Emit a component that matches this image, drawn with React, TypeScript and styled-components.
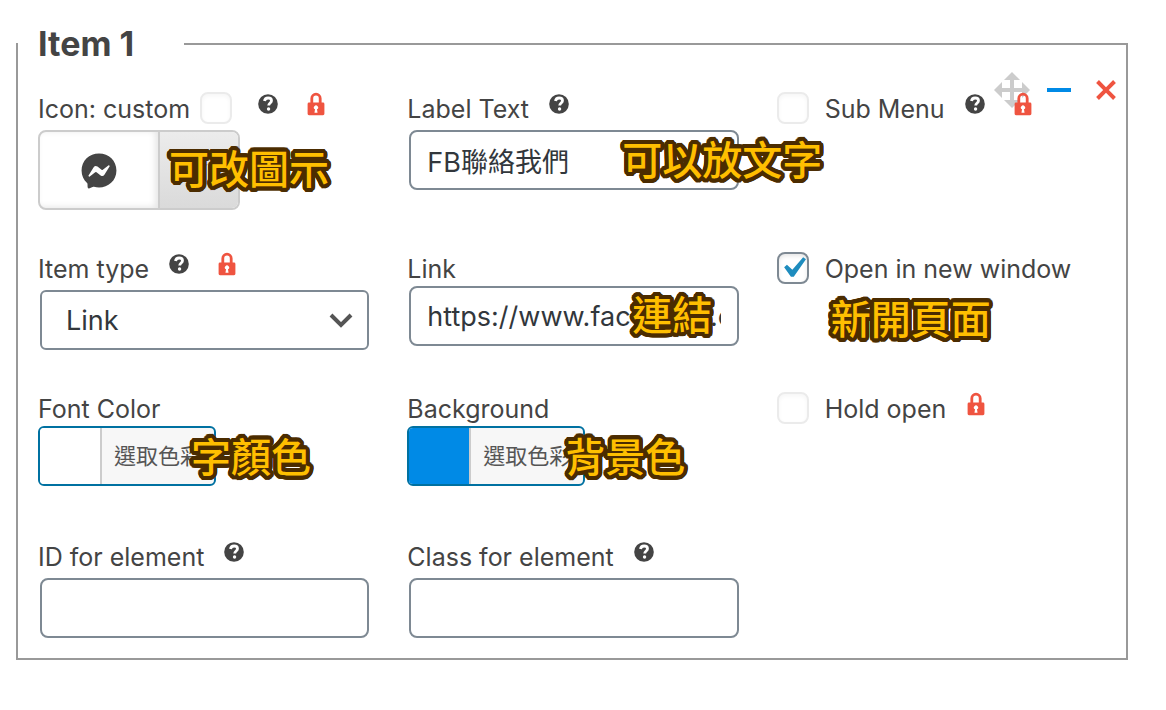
import React, { useState } from "react";
import styled, { createGlobalStyle, css } from "styled-components";
import { FaFacebookMessenger } from "react-icons/fa6";

const Global = createGlobalStyle`
  *, *::before, *::after { box-sizing: border-box; }
  body {
    margin: 0;
    background: #fff;
    color: #444;
    font-family: Inter, "Noto Sans CJK TC", sans-serif;
    font-size: 25px;
  }
  button, input, select { font: inherit; color: inherit; }
`;

const Page = styled.main`
  padding: 24px 38px 50px 16px;
`;

const Panel = styled.fieldset`
  margin: 0;
  padding: 0;
  min-width: 0;
  border: 2px solid #999;
`;

const Title = styled.legend`
  padding: 0 50px 0 20px;
  font-size: 34px;
  line-height: 40px;
  font-weight: 700;
`;

const Body = styled.div`
  position: relative;
  padding: 28px 0 20px;
`;

const Grid = styled.div`
  display: grid;
  grid-template-columns: repeat(3, minmax(0, 1fr));
  row-gap: 42px;
`;

const Field = styled.div`
  position: relative;
  padding: 0 18px 0 20px;
`;

const LabelRow = styled.div<{ $compact?: boolean }>`
  display: flex;
  align-items: flex-start;
  height: ${(p) => (p.$compact ? 34 : 38)}px;
  line-height: 34px;
  white-space: nowrap;
`;

const Icons = styled.span<{ $wide?: boolean }>`
  position: relative;
  z-index: 1;
  display: flex;
  gap: 20px;
  margin: -2px 0 0 ${(p) => (p.$wide ? 22 : 16)}px;
`;

const Glyph = styled.svg<{ $size: number }>`
  display: block;
  flex: none;
  width: ${(p) => p.$size}px;
  height: ${(p) => p.$size}px;
  fill: currentColor;
`;

const HelpButton = styled.button`
  padding: 0;
  border: 0;
  background: none;
  color: #444;
  cursor: help;
`;

const LockMark = styled.span`
  color: #ef5440;
`;

const box = css`
  height: 60px;
  margin-left: 2px;
  width: calc(100% - 2px);
  border: 2px solid #7e8993;
  border-radius: 8px;
  background: #fff;
  color: #32373c;
  font-size: 27px;
`;

const TextInput = styled.input`
  ${box}
  display: block;
  padding: 0 16px;
`;

const SelectWrap = styled.div`
  display: grid;
  align-items: center;
  > * { grid-area: 1 / 1; }
  > svg { justify-self: end; margin-right: 16px; pointer-events: none; }
`;

const Select = styled.select`
  ${box}
  border-radius: 6px;
  padding: 0 48px 0 24px;
  appearance: none;
`;

const CheckWrap = styled.span`
  display: grid;
  flex: none;
  grid-template: 32px / 32px;
  width: 32px;
  height: 32px;
  place-items: center;
  > * { grid-area: 1 / 1; }
  > svg { pointer-events: none; color: #1e8cbe; }
`;

const CheckInput = styled.input`
  appearance: none;
  width: 32px;
  height: 32px;
  margin: 0;
  border: 2px solid #ebebeb;
  border-radius: 8px;
  background: #fff;
  box-shadow: inset 0 2px 4px rgba(0, 0, 0, 0.04);
  &:checked {
    border-color: #7e8993;
    box-shadow: inset 0 2px 4px rgba(0, 0, 0, 0.1);
  }
`;

const CheckLabel = styled.label<{ $boxLast?: boolean }>`
  display: flex;
  flex-direction: ${(p) => (p.$boxLast ? "row-reverse" : "row")};
  gap: ${(p) => (p.$boxLast ? 10 : 16)}px;
`;

const IconPicker = styled.button`
  display: flex;
  width: 202px;
  height: 80px;
  padding: 0;
  overflow: hidden;
  border: 2px solid #ccc;
  border-radius: 8px;
  background: #fff;
`;

const PickedIcon = styled.span`
  display: grid;
  place-items: center;
  flex: 3;
  height: 100%;
  padding-top: 2px;
  border-right: 2px solid #ccc;
  box-shadow: inset -3px -1px 6px rgba(0, 0, 0, 0.1);
  color: #444;
`;

const PickerArrow = styled.span`
  display: grid;
  place-items: center;
  flex: 2;
  height: 100%;
  background: linear-gradient(#ececec, #dadada);
  color: #a5aab2;
`;

const ColorButton = styled.button`
  display: flex;
  width: 178px;
  height: 60px;
  margin-bottom: 12px;
  padding: 0;
  overflow: hidden;
  border: 2px solid #0071a1;
  border-radius: 6px;
  background: #f7f7f7;
  color: #555;
  font-size: 22px;
  line-height: 56px;
  white-space: nowrap;
`;

const Swatch = styled.span<{ $color: string }>`
  flex: 1;
  height: 100%;
  background: ${(p) => p.$color};
`;

const ColorText = styled.span`
  padding: 0 12px;
  border-left: 2px solid #ccc;
`;

const Tools = styled.div`
  position: absolute;
  top: 6px;
  right: 0;
  display: flex;
  gap: 7px;
`;

const ToolButton = styled.button<{ $color: string }>`
  padding: 0;
  border: 0;
  background: none;
  color: ${(p) => p.$color};
  cursor: pointer;
`;

// Round-cornered outline: a ring of solid shadows around each glyph.
const ring = (radius: number, steps: number, color: string) =>
  Array.from({ length: steps }, (_, i) => {
    const a = (i / steps) * Math.PI * 2;
    return `${(Math.cos(a) * radius).toFixed(2)}px ${(Math.sin(a) * radius).toFixed(2)}px 0 ${color}`;
  }).join(", ");

const outline = `${ring(4, 28, "#4b2c00")}, ${ring(2, 12, "#4b2c00")}`;

const Note = styled.strong<{ $x: number; $y: number }>`
  position: absolute;
  z-index: 2;
  left: ${(p) => p.$x}px;
  top: ${(p) => p.$y}px;
  color: #ffbf00;
  font-family: "Noto Sans CJK TC", sans-serif;
  font-size: 40px;
  line-height: 40px;
  font-weight: 500;
  white-space: nowrap;
  text-shadow: ${outline};
  pointer-events: none;
`;

const Help = () => (
  <HelpButton type="button" aria-label="Help">
    <Glyph $size={28} viewBox="0 0 20 20">
      <circle cx="10" cy="10" r="7" />
      <path
        d="M7.5 7.9C7.7 6.4 8.6 5.7 10.1 5.7c1.5 0 2.4.8 2.4 2 0 1.6-2 1.6-2 3.4"
        fill="none"
        stroke="#fff"
        strokeWidth="2"
      />
      <circle cx="10.4" cy="13.6" r="1.2" fill="#fff" />
    </Glyph>
  </HelpButton>
);

const Lock = () => (
  <LockMark role="img" aria-label="Locked">
    <Glyph $size={28} viewBox="0 0 20 20">
      <path d="M6 9V6a4 4 0 0 1 8 0v3h1a1 1 0 0 1 1 1v7a1 1 0 0 1-1 1H5a1 1 0 0 1-1-1v-7a1 1 0 0 1 1-1zm2 0h4V6a2 2 0 0 0-4 0z" />
      <path d="M8.9 16.2l.4-2.4a1.5 1.5 0 1 1 1.4 0l.4 2.4z" fill="#fff" />
    </Glyph>
  </LockMark>
);

type CheckProps = { text: string; checked?: boolean; boxLast?: boolean };

const Check = ({ text, checked = false, boxLast }: CheckProps) => {
  const [on, setOn] = useState(checked);
  return (
    <CheckLabel $boxLast={boxLast}>
      <CheckWrap>
        <CheckInput type="checkbox" checked={on} onChange={() => setOn(!on)} />
        {on && (
          <Glyph $size={42} viewBox="0 0 20 20">
            <path d="M14.83 4.89l1.34.94-5.81 8.38H9.02L5.78 9.67l1.34-1.25 2.57 2.4z" />
          </Glyph>
        )}
      </CheckWrap>
      {text}
    </CheckLabel>
  );
};

const ColorPick = ({ id, color }: { id: string; color: string }) => (
  <ColorButton type="button" id={id}>
    <Swatch $color={color} />
    <ColorText>選取色彩</ColorText>
  </ColorButton>
);

export default function App() {
  return (
    <Page>
      <Global />
      <Panel>
        <Title>Item 1</Title>
        <Body>
          <Tools>
            <ToolButton type="button" $color="#ccc" aria-label="Move">
              <Glyph $size={40} viewBox="0 0 20 20">
                <path d="M19 10l-4 4v-3h-4v4h3l-4 4-4-4h3v-4H5v3l-4-4 4-4v3h4V5H6l4-4 4 4h-3v4h4V6z" />
              </Glyph>
            </ToolButton>
            <ToolButton type="button" $color="#008ae6" aria-label="Collapse">
              <Glyph $size={40} viewBox="0 0 20 20">
                <path d="M4 9h12v2H4z" />
              </Glyph>
            </ToolButton>
            <ToolButton type="button" $color="#ef5440" aria-label="Remove">
              <Glyph $size={40} viewBox="0 0 20 20">
                <path d="M14.95 6.46L11.41 10l3.54 3.54-1.41 1.41L10 11.42l-3.53 3.53-1.42-1.42L8.58 10 5.05 6.47l1.42-1.42L10 8.58l3.54-3.53z" />
              </Glyph>
            </ToolButton>
          </Tools>
          <Grid>
            <Field>
              <LabelRow>
                <Check text="Icon: custom" boxLast />
                <Icons $wide>
                  <Help />
                  <Lock />
                </Icons>
              </LabelRow>
              <IconPicker type="button" aria-label="Choose icon">
                <PickedIcon>
                  <FaFacebookMessenger size={36} />
                </PickedIcon>
                <PickerArrow>
                  <Glyph $size={20} viewBox="0 0 20 20">
                    <path d="M1 4h18l-9 10z" />
                  </Glyph>
                </PickerArrow>
              </IconPicker>
              <Note $x={151} $y={55}>可改圖示</Note>
            </Field>
            <Field>
              <LabelRow>
                <label htmlFor="label-text">Label Text</label>
                <Icons>
                  <Help />
                </Icons>
              </LabelRow>
              <TextInput id="label-text" type="text" defaultValue="FB聯絡我們" />
              <Note $x={235} $y={46}>可以放文字</Note>
            </Field>
            <Field>
              <LabelRow>
                <Check text="Sub Menu" />
                <Icons>
                  <Help />
                  <Lock />
                </Icons>
              </LabelRow>
            </Field>

            <Field>
              <LabelRow>
                <label htmlFor="item-type">Item type</label>
                <Icons>
                  <Help />
                  <Lock />
                </Icons>
              </LabelRow>
              <SelectWrap>
                <Select id="item-type" defaultValue="link">
                  <option value="link">Link</option>
                </Select>
                <Glyph $size={24} viewBox="0 0 24 24">
                  <path d="M2 7l10 10L22 7" fill="none" stroke="#555" strokeWidth="4" />
                </Glyph>
              </SelectWrap>
            </Field>
            <Field>
              <LabelRow $compact>
                <label htmlFor="link-url">Link</label>
              </LabelRow>
              <TextInput id="link-url" type="text" defaultValue="https://www.facebook.com/" />
              <Note $x={245} $y={41}>連結</Note>
            </Field>
            <Field>
              <LabelRow>
                <Check text="Open in new window" checked />
              </LabelRow>
              <Note $x={74} $y={45}>新開頁面</Note>
            </Field>

            <Field>
              <LabelRow $compact>
                <label htmlFor="font-color">Font Color</label>
              </LabelRow>
              <ColorPick id="font-color" color="#fff" />
              <Note $x={173} $y={43}>字顏色</Note>
            </Field>
            <Field>
              <LabelRow $compact>
                <label htmlFor="background-color">Background</label>
              </LabelRow>
              <ColorPick id="background-color" color="#008ae6" />
              <Note $x={178} $y={43}>背景色</Note>
            </Field>
            <Field>
              <LabelRow>
                <Check text="Hold open" />
                <Icons>
                  <Lock />
                </Icons>
              </LabelRow>
            </Field>

            <Field>
              <LabelRow>
                <label htmlFor="element-id">ID for element</label>
                <Icons>
                  <Help />
                </Icons>
              </LabelRow>
              <TextInput id="element-id" type="text" />
            </Field>
            <Field>
              <LabelRow>
                <label htmlFor="element-class">Class for element</label>
                <Icons>
                  <Help />
                </Icons>
              </LabelRow>
              <TextInput id="element-class" type="text" />
            </Field>
          </Grid>
        </Body>
      </Panel>
    </Page>
  );
}
